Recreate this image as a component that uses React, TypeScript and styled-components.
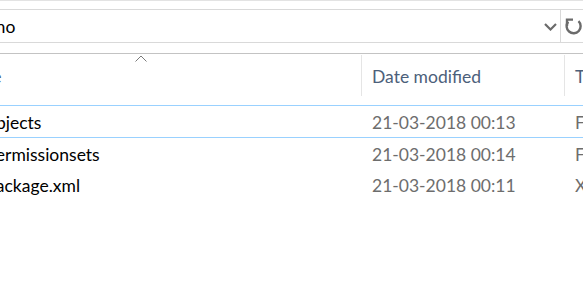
import React from 'react';
import styled, { createGlobalStyle } from 'styled-components';

const Global = createGlobalStyle`
  html, body { margin: 0; padding: 0; background: #ffffff; }
  body {
    width: 583px;
    height: 306px;
    overflow: hidden;
    font-family: Lato, "Open Sans", sans-serif;
  }
`;

const Window = styled.div`
  margin-left: -80px;
  width: 760px;
  display: flex;
  flex-direction: column;
`;

const RibbonEdge = styled.div`
  height: 1px;
  background: #e3e3e3;
  margin-bottom: 8px;
`;

const AddressBar = styled.div`
  display: flex;
  height: 34px;
  box-sizing: border-box;
  border: 1px solid #d9d9d9;
`;

const AddressField = styled.div`
  flex: 0 0 639px;
  display: flex;
  align-items: center;
`;

const AddressText = styled.span`
  flex: 1;
  padding-left: 51px;
  padding-top: 2px;
  font-size: 17.5px;
  line-height: 24px;
  color: #000;
`;

const DropButton = styled.div`
  width: 30px;
  display: flex;
  align-items: center;
  justify-content: flex-start;
  padding-left: 14px;
  box-sizing: border-box;
  padding-top: 1px;
`;

const RefreshButton = styled.div`
  width: 40px;
  display: flex;
  align-items: center;
  padding-left: 4px;
  border-left: 1px solid #d9d9d9;
`;

const Header = styled.div`
  margin-top: 10px;
  border-top: 1px solid #c3c3c3;
  height: 51px;
  display: flex;
`;

const HeaderCell = styled.div<{ $w: number }>`
  flex: 0 0 ${(p) => p.$w}px;
  display: flex;
  flex-direction: column;
`;

const SortSlot = styled.div`
  height: 8px;
  display: flex;
  justify-content: center;
  align-items: flex-end;
`;

const HeaderLabel = styled.span<{ $pad: number }>`
  padding-left: ${(p) => p.$pad}px;
  padding-top: 3px;
  font-size: 17.5px;
  line-height: 24px;
  color: #4c607a;
  white-space: nowrap;
`;

const Divider = styled.div`
  flex: 0 0 1px;
  margin-top: 1px;
  height: 41px;
  background: #e5e5e5;
`;

const List = styled.div`
  display: flex;
  flex-direction: column;
`;

const Row = styled.div<{ $focused?: boolean }>`
  display: flex;
  height: 31.5px;
  box-sizing: border-box;
  border-top: 1px solid ${(p) => (p.$focused ? '#99d1ff' : 'transparent')};
  box-shadow: ${(p) => (p.$focused ? '0 1px 0 #99d1ff' : 'none')};
  padding-top: 5px;
`;

const Cell = styled.span<{ $w: number; $pad: number; $tone: 'name' | 'meta' }>`
  flex: 0 0 ${(p) => p.$w}px;
  box-sizing: border-box;
  padding-left: ${(p) => p.$pad}px;
  font-size: 17.5px;
  line-height: 24px;
  white-space: nowrap;
  overflow: hidden;
  color: ${(p) => (p.$tone === 'name' ? '#000000' : '#6d6d6d')};
`;

const ChevronDown = () => (
  <svg width="13" height="8" viewBox="0 0 13 8">
    <path d="M1 1 L6.5 6.5 L12 1" fill="none" stroke="#6b6b6b" strokeWidth="2.2" />
  </svg>
);

const RefreshIcon = () => (
  <svg width="18" height="18" viewBox="0 0 18 18">
    <path
      d="M13.5 4.2 A7 7 0 1 1 3.2 4.8"
      fill="none"
      stroke="#6b6b6b"
      strokeWidth="2.4"
    />
    <path d="M2 9 V2.6 H8" fill="none" stroke="#6b6b6b" strokeWidth="2.4" />
  </svg>
);

const SortArrow = () => (
  <svg width="12" height="7" viewBox="0 0 12 7">
    <path d="M0.5 6.5 L6 1 L11.5 6.5" fill="none" stroke="#7a7a7a" strokeWidth="1" />
  </svg>
);

const files = [
  { name: 'objects', date: '21-03-2018 00:13', type: 'File folder' },
  { name: 'permissionsets', date: '21-03-2018 00:14', type: 'File folder' },
  { name: 'package.xml', date: '21-03-2018 00:11', type: 'XML Document' },
];

export default function App() {
  return (
    <>
      <Global />
      <Window>
        <RibbonEdge />
        <AddressBar>
          <AddressField>
            <AddressText>demo</AddressText>
            <DropButton>
              <ChevronDown />
            </DropButton>
          </AddressField>
          <RefreshButton>
            <RefreshIcon />
          </RefreshButton>
        </AddressBar>
        <Header>
          <HeaderCell $w={441}>
            <SortSlot>
              <SortArrow />
            </SortSlot>
            <HeaderLabel $pad={36}>Name</HeaderLabel>
          </HeaderCell>
          <Divider />
          <HeaderCell $w={202}>
            <SortSlot />
            <HeaderLabel $pad={10}>Date modified</HeaderLabel>
          </HeaderCell>
          <Divider />
          <HeaderCell $w={150}>
            <SortSlot />
            <HeaderLabel $pad={10}>Type</HeaderLabel>
          </HeaderCell>
        </Header>
        <List>
          {files.map((f, i) => (
            <Row key={f.name} $focused={i === 0}>
              <Cell $w={442} $pad={66} $tone="name">
                {f.name}
              </Cell>
              <Cell $w={203} $pad={10} $tone="meta">
                {f.date}
              </Cell>
              <Cell $w={150} $pad={10} $tone="meta">
                {f.type}
              </Cell>
            </Row>
          ))}
        </List>
      </Window>
    </>
  );
}
